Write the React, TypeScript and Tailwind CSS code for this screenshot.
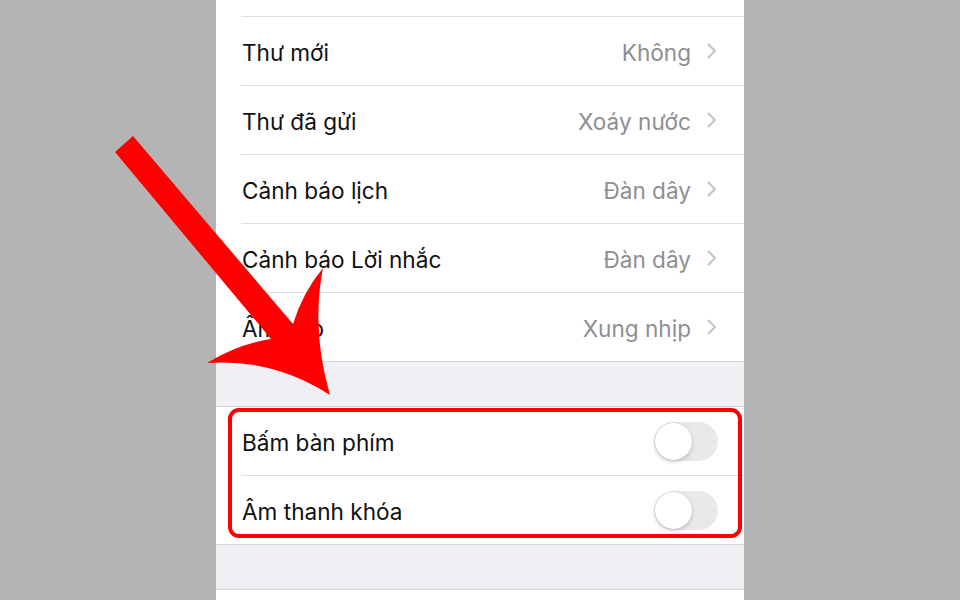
import React from 'react'

type Row = { label: string; value: string }

const soundRows: Row[] = [
    { label: 'Thư mới', value: 'Không' },
    { label: 'Thư đã gửi', value: 'Xoáy nước' },
    { label: 'Cảnh báo lịch', value: 'Đàn dây' },
    { label: 'Cảnh báo Lời nhắc', value: 'Đàn dây' },
    { label: 'Âm báo', value: 'Xung nhịp' },
]

const Chevron = () => (
    <svg width="10" height="16" viewBox="0 0 10 16" className="ml-[16px] shrink-0">
        <path d="M1.5 1.5 L8 8 L1.5 14.5" fill="none" stroke="#c4c4c7" strokeWidth="2" strokeLinecap="round" strokeLinejoin="round" />
    </svg>
)

const Toggle = () => (
    <div className="relative w-[64px] h-[39px] rounded-full bg-[#e9e9eb]">
        <div className="absolute left-[1px] top-[1px] w-[37px] h-[37px] rounded-full bg-white shadow-[0_2px_4px_rgba(0,0,0,0.18),0_0_0_0.5px_rgba(0,0,0,0.06)]" />
    </div>
)

function ValueRow({ row, last }: { row: Row; last?: boolean }) {
    return (
        <div className={last ? 'h-[68px] pl-[25px] bg-white' : 'h-[69px] pl-[25px] bg-white'}>
            <div className={`h-full flex items-center pr-[27px] ${last ? '' : 'border-b border-[#dedee2]'}`}>
                <span className="flex-1 pt-[3px] pl-[1px] text-[22.6px] text-[#111]">{row.label}</span>
                <span className="pt-[3px] text-[22.6px] text-[#8e8e93]">{row.value}</span>
                <Chevron />
            </div>
        </div>
    )
}

function ToggleRow({ label, last }: { label: string; last?: boolean }) {
    return (
        <div className={last ? 'h-[68px] pl-[25px] bg-white' : 'h-[69px] pl-[25px] bg-white'}>
            <div className={`h-full flex items-center pr-[26px] ${last ? '' : 'border-b border-[#dedee2]'}`}>
                <span className="flex-1 pt-[3px] pl-[1px] text-[22.6px] text-[#111]">{label}</span>
                <Toggle />
            </div>
        </div>
    )
}

export default function App() {
    return (
        <div className="relative w-[960px] h-[600px] overflow-hidden bg-[#b4b4b4] font-['Inter',sans-serif]">
            <div className="mx-auto w-[528px] h-full bg-[#efeff4] flex flex-col">
                {/* sounds list, scrolled */}
                <div className="bg-white border-b border-[#d6d6da]">
                    <div className="h-[17px] pl-[25px]">
                        <div className="h-full border-b border-[#dedee2]" />
                    </div>
                    {soundRows.map((row, i) => (
                        <ValueRow key={row.label} row={row} last={i === soundRows.length - 1} />
                    ))}
                </div>

                <div className="h-[44px] shrink-0" />

                <div className="relative bg-white border-y border-[#d6d6da]">
                    <ToggleRow label="Bấm bàn phím" />
                    <ToggleRow label="Âm thanh khóa" last />
                    <div className="absolute left-[12px] top-[1px] w-[514px] h-[130px] rounded-[11px] border-[4px] border-[#ff0000]" />
                </div>

                <div className="h-[44px] shrink-0" />

                <div className="flex-1 bg-white border-t border-[#d6d6da]" />
            </div>

            {/* pointer arrow */}
            <svg className="absolute inset-0 pointer-events-none" width="960" height="600" viewBox="0 0 960 600">
                <path
                    d="M115 152 L133 136 L293 324 Q303 292 323 268 Q311 330 330 395 Q272 358 207 363 Q238 344 271 339 Z"
                    fill="#ff0000"
                />
            </svg>
        </div>
    )
}
